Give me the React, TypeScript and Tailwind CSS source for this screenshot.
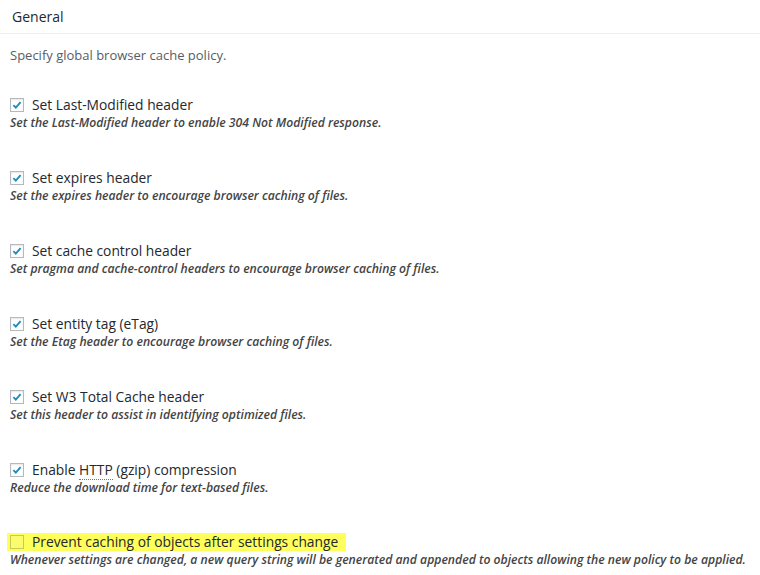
const ITEMS = [
  {
    label: "Set Last-Modified header",
    desc: "Set the Last-Modified header to enable 304 Not Modified response.",
    checked: true,
  },
  {
    label: "Set expires header",
    desc: "Set the expires header to encourage browser caching of files.",
    checked: true,
  },
  {
    label: "Set cache control header",
    desc: "Set pragma and cache-control headers to encourage browser caching of files.",
    checked: true,
  },
  {
    label: "Set entity tag (eTag)",
    desc: "Set the Etag header to encourage browser caching of files.",
    checked: true,
  },
  {
    label: "Set W3 Total Cache header",
    desc: "Set this header to assist in identifying optimized files.",
    checked: true,
  },
  {
    label: "gzip",
    desc: "Reduce the download time for text-based files.",
    checked: true,
  },
];

function Box({ checked, highlight }: { checked: boolean; highlight?: boolean }) {
  return (
    <span
      className={
        highlight
          ? "flex h-[14px] w-[14px] shrink-0 items-center justify-center border border-[#c9c95a] bg-[#fbfb6e]"
          : "flex h-[14px] w-[14px] shrink-0 items-center justify-center border border-[#b4b9be] bg-white shadow-[inset_0_1px_2px_rgba(0,0,0,0.1)]"
      }
    >
      {checked && (
        <svg viewBox="0 0 14 14" className="h-[12px] w-[12px]">
          <path d="M2.8 7.2 L5.6 10 L11.2 3.6" fill="none" stroke="#1e8cbe" strokeWidth="2.2" />
        </svg>
      )}
    </span>
  );
}

export default function App() {
  return (
    <div
      className="h-[575px] w-[760px] overflow-hidden bg-white text-[#32373c]"
      style={{ fontFamily: '"Open Sans", sans-serif' }}
    >
      <div className="flex h-[34px] items-center border-b border-[#eeeeee] pl-[12px] pb-[1px] text-[14px] text-[#23282d]">
        General
      </div>

      <p className="mt-[12px] pl-[10px] text-[13px] leading-[18px] text-[#555d66]">
        Specify global browser cache policy.
      </p>

      <div className="mt-[32px] flex flex-col gap-[37px] pl-[10px]">
        {ITEMS.map((it) => (
          <div key={it.desc}>
            <label className="flex h-[18px] items-center gap-[8px] text-[13.8px] text-[#23282d]">
              <Box checked={it.checked} />
              {it.label === "gzip" ? (
                <span>
                  Enable{" "}
                  <abbr className="border-b border-dotted border-[#777] no-underline">HTTP</abbr>{" "}
                  (gzip) compression
                </span>
              ) : (
                <span>{it.label}</span>
              )}
            </label>
            <p className="text-[12.2px] font-semibold italic leading-[18px] text-[#444]">{it.desc}</p>
          </div>
        ))}

        <div className="-mt-[1px]">
          <div className="-ml-[3px] flex">
            <label className="flex h-[18px] items-center gap-[8px] bg-[#ffff5c] pl-[3px] pr-[8px] text-[13.8px] text-[#23282d]">
              <Box checked={false} highlight />
              <span>Prevent caching of objects after settings change</span>
            </label>
          </div>
          <p className="text-[12.2px] font-semibold italic leading-[18px] text-[#444]">
            Whenever settings are changed, a new query string will be generated and appended to objects allowing the new policy to be applied.
          </p>
        </div>
      </div>
    </div>
  );
}
